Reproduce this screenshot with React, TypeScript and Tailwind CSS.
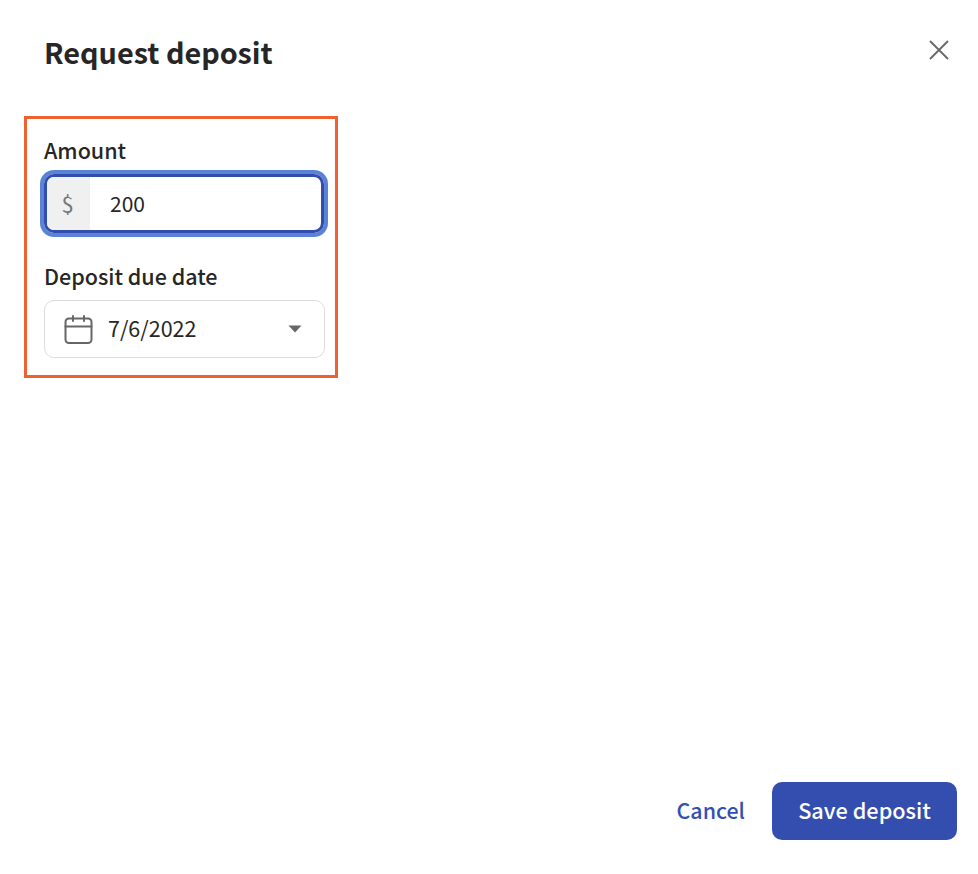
function CalendarIcon() {
  return (
    <svg width="29" height="29" viewBox="0 0 29 29" fill="none" stroke="#666" strokeWidth="2" strokeLinecap="round" strokeLinejoin="round">
      <rect x="1.5" y="3.5" width="26" height="24.5" rx="3.5" />
      <path d="M1.5 11.5h26" />
      <path d="M9 1v5" />
      <path d="M20 1v5" />
    </svg>
  );
}

export default function App() {
  return (
    <div className="h-[874px] bg-white flex flex-col text-[#262626] font-['Noto_Sans_CJK_SC','Noto_Sans',sans-serif]">
      {/* Header */}
      <div className="flex justify-between pl-[44px] pr-[28px] pt-[30px] h-[116px] items-start">
        <h1 className="text-[28.8px] leading-[44px] font-bold">Request deposit</h1>
        <button className="mt-[9px] text-[#666]">
          <svg width="22" height="22" viewBox="0 0 22 22" stroke="currentColor" strokeWidth="1.8" fill="none">
            <path d="M2 2l18 18M20 2L2 20" />
          </svg>
        </button>
      </div>

      {/* Form */}
      <div className="ml-[24px] w-[314px] h-[262px] border-[3px] border-[#ef622f] pl-[17px] pr-[10px]">
        <label className="block mt-[17px] text-[21.5px] leading-[28px] font-medium">Amount</label>
        <div className="mt-[10px] h-[59px] w-[280px] flex rounded-[10px] border-[3px] border-[#334dae] ring-[4px] ring-[#5a83d8] overflow-hidden">
          <div className="w-[43px] bg-[#f0f0f0] flex items-center justify-center pr-[2px] text-[22px] text-[#777]">$</div>
          <div className="pl-[20px] flex items-center text-[21px]">200</div>
        </div>
        <label className="block mt-[29px] text-[21.5px] leading-[28px] font-medium">Deposit due date</label>
        <div className="mt-[10px] h-[58px] w-[281px] flex items-center rounded-[10px] border border-[#dcdcdc] pl-[19px] pr-[22px]">
          <CalendarIcon />
          <span className="ml-[15px] pb-[1px] text-[21.5px] flex-1">7/6/2022</span>
          <svg width="14" height="8" viewBox="0 0 14 8" fill="#666">
            <path d="M0.5 0.5h13L7 7.5z" />
          </svg>
        </div>
      </div>

      {/* Footer */}
      <div className="mt-auto mb-[34px] flex items-center justify-end pr-[21px]">
        <button className="mr-[27px] pb-[1px] text-[21.4px] font-medium text-[#344fb1]">Cancel</button>
        <button className="w-[185px] h-[58px] pb-[1px] rounded-[10px] bg-[#344eb0] text-white text-[21.7px] font-medium">Save deposit</button>
      </div>
    </div>
  );
}
